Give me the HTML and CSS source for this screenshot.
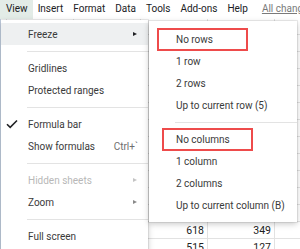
FILE: index.html
```html
<!DOCTYPE html>
<html lang="en">
<head>
    <meta charset="UTF-8">
    <meta name="viewport" content="width=device-width, initial-scale=1.0">
    <title>View menu - Freeze</title>
    <link rel="stylesheet" href="styles.css">
</head>
<body>
    <div class="menubar">
        <div class="top-item active">View</div>
        <div class="top-item">Insert</div>
        <div class="top-item">Format</div>
        <div class="top-item">Data</div>
        <div class="top-item">Tools</div>
        <div class="top-item">Add-ons</div>
        <div class="top-item">Help</div>
        <div class="top-item saved">All changes saved in Drive</div>
    </div>

    <div class="workspace">
        <div class="sheet">
            <div class="row"><div class="cell"></div><div class="cell"></div><div class="cell"></div><div class="cell"></div><div class="cell"></div></div>
            <div class="row"><div class="cell"></div><div class="cell"></div><div class="cell"></div><div class="cell"></div><div class="cell"></div></div>
            <div class="row"><div class="cell"></div><div class="cell"></div><div class="cell"></div><div class="cell"></div><div class="cell"></div></div>
            <div class="row"><div class="cell"></div><div class="cell"></div><div class="cell"></div><div class="cell"></div><div class="cell"></div></div>
            <div class="row"><div class="cell"></div><div class="cell"></div><div class="cell"></div><div class="cell"></div><div class="cell"></div></div>
            <div class="row"><div class="cell"></div><div class="cell"></div><div class="cell"></div><div class="cell"></div><div class="cell"></div></div>
            <div class="row"><div class="cell"></div><div class="cell"></div><div class="cell"></div><div class="cell"></div><div class="cell"></div></div>
            <div class="row"><div class="cell"></div><div class="cell"></div><div class="cell"></div><div class="cell"></div><div class="cell"></div></div>
            <div class="row"><div class="cell"></div><div class="cell"></div><div class="cell"></div><div class="cell"></div><div class="cell"></div></div>
            <div class="row"><div class="cell"></div><div class="cell"></div><div class="cell"></div><div class="cell"></div><div class="cell"></div></div>
            <div class="row"><div class="cell"></div><div class="cell"></div><div class="cell"></div><div class="cell"></div><div class="cell"></div></div>
            <div class="row"><div class="cell"></div><div class="cell"></div><div class="cell"></div><div class="cell"></div><div class="cell"></div></div>
            <div class="row"><div class="cell"></div><div class="cell"></div><div class="cell"></div><div class="cell">618</div><div class="cell">349</div></div>
            <div class="row"><div class="cell"></div><div class="cell"></div><div class="cell"></div><div class="cell">515</div><div class="cell">127</div></div>
        </div>

        <div class="menu view-menu">
            <div class="item hover"><span class="mark"></span><span class="label">Freeze</span><span class="arrow dark"></span></div>
            <div class="sep"></div>
            <div class="item"><span class="mark"></span><span class="label">Gridlines</span></div>
            <div class="item"><span class="mark"></span><span class="label">Protected ranges</span></div>
            <div class="sep"></div>
            <div class="item">
                <span class="mark">
                    <svg width="12" height="10" viewBox="0 0 12 10"><path d="M1 5.2 L4.2 8.3 L11 1.5" fill="none" stroke="#202124" stroke-width="1.6"/></svg>
                </span>
                <span class="label">Formula bar</span>
            </div>
            <div class="item"><span class="mark"></span><span class="label">Show formulas</span><span class="shortcut">Ctrl+`</span></div>
            <div class="sep"></div>
            <div class="item disabled"><span class="mark"></span><span class="label">Hidden sheets</span><span class="arrow light"></span></div>
            <div class="item"><span class="mark"></span><span class="label">Zoom</span><span class="arrow"></span></div>
            <div class="sep"></div>
            <div class="item"><span class="mark"></span><span class="label">Full screen</span></div>
        </div>

        <div class="menu freeze-menu">
            <div class="item"><span class="mark"></span><span class="label">No rows</span></div>
            <div class="item"><span class="mark"></span><span class="label">1 row</span></div>
            <div class="item"><span class="mark"></span><span class="label">2 rows</span></div>
            <div class="item"><span class="mark"></span><span class="label">Up to current row (5)</span></div>
            <div class="sep"></div>
            <div class="item"><span class="mark"></span><span class="label">No columns</span></div>
            <div class="item"><span class="mark"></span><span class="label">1 column</span></div>
            <div class="item"><span class="mark"></span><span class="label">2 columns</span></div>
            <div class="item"><span class="mark"></span><span class="label">Up to current column (B)</span></div>

            <!-- red call-outs drawn over the menu -->
            <div class="callout callout-rows"></div>
            <div class="callout callout-cols"></div>
        </div>
    </div>
</body>
</html>
```

FILE: styles.css
```css
body {
    margin: 0;
    width: 300px;
    height: 249px;
    overflow: hidden;
    background-color: #ffffff;
    font-family: Roboto, "Liberation Sans", Arial, sans-serif;
    color: #202124;
}
.menubar {
    display: flex;
    align-items: center;
    height: 19px;
    font-size: 10px;
    white-space: nowrap;
    overflow: hidden;
}
.top-item {
    height: 19px;
    line-height: 18px;
    padding: 0 5px;
    color: #202124;
}
.top-item.active {
    padding-left: 6px;
    background-color: #e3ece7;
}
.top-item.saved {
    padding-left: 9px;
    color: #7a7a7a;
    text-decoration: underline;
}
.workspace {
    position: relative;
    height: 230px;
    border-left: 1px solid #cfdcef;
}
.sheet {
    display: flex;
    flex-direction: column;
}
.row {
    display: flex;
    height: 17px;
    border-bottom: 1px solid #e2e2e2;
    box-sizing: border-box;
}
.row:first-child {
    height: 16px;
}
.cell {
    width: 67px;
    flex: none;
    border-right: 1px solid #e2e2e2;
    box-sizing: border-box;
    padding-right: 3px;
    text-align: right;
    font-size: 10.5px;
    line-height: 17px;
    color: #222;
}
.cell:first-child {
    width: 6px;
}
.menu {
    position: absolute;
    background-color: #ffffff;
    box-shadow: 0 0 0 1px rgba(0, 0, 0, 0.07), 0 2px 6px rgba(0, 0, 0, 0.22);
    font-size: 10px;
}
.view-menu {
    left: 0;
    top: 1px;
    width: 147px;
    padding: 3px 0 8px;
}
.freeze-menu {
    left: 148px;
    top: 2px;
    width: 148px;
    padding: 7px 0 6px;
}
.item {
    display: flex;
    align-items: center;
    height: 22px;
    padding-right: 10px;
    color: #3a3a3a;
    white-space: nowrap;
}
.item.hover {
    background-color: #eef0f1;
}
.item.disabled {
    color: #b8b8b8;
}
.mark {
    flex: none;
    width: 22px;
    padding-left: 5px;
    display: flex;
    align-items: center;
}
.label {
    flex: 1;
}
.shortcut {
    color: #6e6e6e;
}
.arrow {
    width: 0;
    height: 0;
    border-top: 2.5px solid transparent;
    border-bottom: 2.5px solid transparent;
    border-left: 4px solid #8a8a8a;
    margin-right: 1px;
}
.arrow.dark {
    border-left-color: #202124;
}
.arrow.light {
    border-left-color: #c4c4c4;
}
.sep {
    height: 1px;
    margin: 6px 0 5px 26px;
    background-color: #e3e3e3;
}
.callout {
    position: absolute;
    border: 2px solid #ee4b4b;
    box-sizing: border-box;
}
.callout-rows {
    left: 8px;
    top: 7px;
    width: 91px;
    height: 23px;
}
.callout-cols {
    left: 13px;
    top: 107px;
    width: 91px;
    height: 23px;
}
```
